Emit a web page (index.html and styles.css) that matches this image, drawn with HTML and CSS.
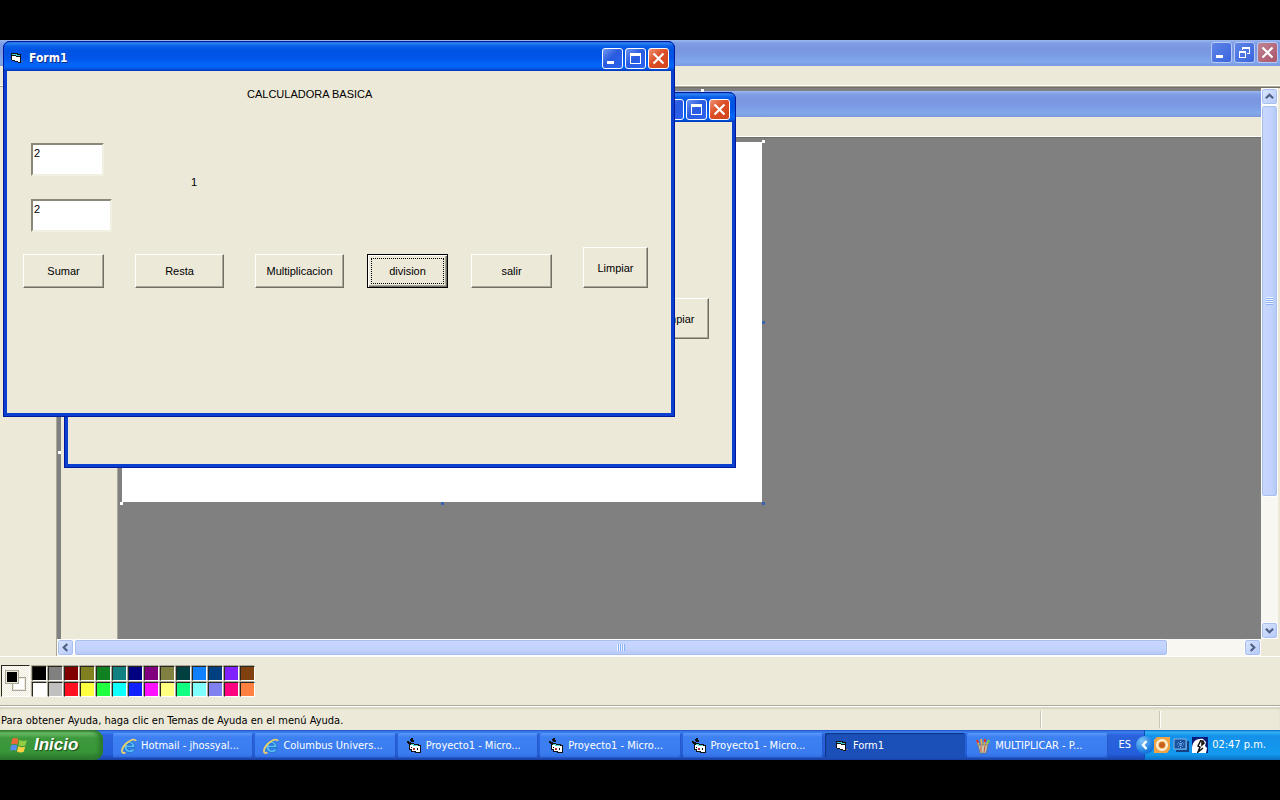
FILE: index.html
```html
<!DOCTYPE html>
<html lang="es">
<head>
    <meta charset="UTF-8">
    <meta name="viewport" content="width=device-width, initial-scale=1.0">
    <title>Form1</title>
    <link rel="stylesheet" href="styles.css">
</head>
<body>

<svg class="defs" aria-hidden="true">
    <symbol id="i-min" viewBox="0 0 19 19"><path d="M4 12h7v3H4z" fill="#fff"/></symbol>
    <symbol id="i-max" viewBox="0 0 19 19"><path d="M4 4h11v11H4zM5 7v7h9V7z" fill="#fff" fill-rule="evenodd"/></symbol>
    <symbol id="i-restore" viewBox="0 0 19 19"><path d="M7 4h8v7h-3v-1h2V6H8v1H7zM4 8h7v7H4zM5 10v4h5v-4z" fill="#fff" fill-rule="evenodd"/></symbol>
    <symbol id="i-close" viewBox="0 0 19 19"><path d="M4.500 4.500l10 10M14.500 4.500l-10 10" stroke="#fff" stroke-width="2.200" fill="none"/></symbol>
    <symbol id="i-arrow" viewBox="0 0 10 10"><path d="M1 7l4-4 4 4" stroke="#4d6185" stroke-width="2.400" fill="none"/></symbol>
    <symbol id="i-form" viewBox="0 0 16 16">
        <path d="M3 3h7v1h3v9h-3v-1H7v-1H4v-1H3z" fill="#111"/>
        <path d="M4 4h5v1h3v1H8V5H4z" fill="#4cc"/>
        <path d="M4 6h4v1h4v5h-2v-1H7v-1H4z" fill="#fff"/>
        <path d="M13 12h2v-1h-1z" fill="#777"/>
    </symbol>
    <symbol id="i-vb" viewBox="0 0 16 16">
        <path d="M5 0h2v2h1v2H5V3H4V1h1zM1 3h2v1h2v2H2V5H1zM3 5h5v1h5v1h2v8H9v-1H5v-2H3z" fill="#111"/>
        <path d="M5 6h3v1h4v1H7V7H5z" fill="#5dd"/>
        <path d="M4 7h3v1h7v6h-4v-1H6v-2H4z" fill="#fff"/>
        <path d="M7 10h2v2H7z" fill="#a33"/>
        <path d="M11 10h1v2h-1zM5 9h1v1H5z" fill="#111"/>
    </symbol>
    <symbol id="i-ie" viewBox="0 0 16 16">
        <path d="M14 9.500H6c.3 3 4 3.200 5 1.500h3C12.500 16.500 3 15.500 3 8.500S14 1.500 14 9.500zM6 7.200h5c-.5-2.500-4.500-2.500-5 0z" fill="#5cc0f7" stroke="#1765c0" stroke-width=".7" fill-rule="evenodd"/>
        <path d="M15 3C13.500-.5 5 3.500 2 9.500c-2 4-1 6.500 2.500 5" stroke="#e8cf6a" stroke-width="1.800" fill="none"/>
    </symbol>
    <symbol id="i-paint" viewBox="0 0 16 16">
        <path d="M4 8L2 2M7 8L6 1M9 8l1-7M11 8l3-6" stroke-width="1.800" stroke="#e6b04a"/>
        <path d="M2 2l1 3M10 1v3" stroke="#d33" stroke-width="2"/>
        <path d="M14 2l-1 3" stroke="#5c5" stroke-width="2"/>
        <path d="M3 7h10l-2 8H5z" fill="#c9c4b0" stroke="#6b6f60" stroke-width=".7"/>
        <path d="M6 8v6M10 8l-1 6" stroke="#c8542e"/>
    </symbol>
</svg>

<main class="desktop">

    <!-- Paint -->
    <section class="paint">
        <div class="paint-title">
            <div class="win-buttons">
                <button class="win-btn" aria-label="Minimizar"><svg><use href="#i-min"/></svg></button>
                <button class="win-btn" aria-label="Restaurar"><svg><use href="#i-restore"/></svg></button>
                <button class="win-btn close" aria-label="Cerrar"><svg><use href="#i-close"/></svg></button>
            </div>
        </div>
        <div class="paint-menu"></div>

        <div class="workspace">
            <div class="toolbox"></div>
            <div class="view">
                <div class="view-row">
                    <div class="canvas">
                        <div class="picture">
                            <i class="handle top-mid"></i>
                            <i class="handle left-mid"></i>
                            <div class="paint-title"></div>
                            <div class="paint-menu"></div>
                            <div class="picture-work">
                                <div class="toolbox"></div>
                                <div class="picture-area">
                                    <div class="sheet">
                                        <i class="handle ne"></i>
                                        <i class="handle e"></i>
                                        <i class="handle se"></i>
                                        <i class="handle s"></i>
                                        <i class="handle sw"></i>
                                    </div>
                                </div>
                            </div>
                        </div>
                    </div>
                    <div class="scroll vertical">
                        <button class="scroll-btn" aria-label="Subir"><svg><use href="#i-arrow"/></svg></button>
                        <div class="thumb"><span class="grip"></span></div>
                        <div class="track"></div>
                        <button class="scroll-btn down" aria-label="Bajar"><svg><use href="#i-arrow"/></svg></button>
                    </div>
                </div>
                <div class="scroll horizontal">
                    <button class="scroll-btn left" aria-label="Izquierda"><svg><use href="#i-arrow"/></svg></button>
                    <div class="thumb"><span class="grip"></span></div>
                    <div class="track"></div>
                    <button class="scroll-btn right" aria-label="Derecha"><svg><use href="#i-arrow"/></svg></button>
                </div>
            </div>
        </div>

        <div class="palette">
            <div class="current"><i class="back"></i><i class="front"></i></div>
            <div class="colors">
                <i class="c-black"></i><i class="c-gray"></i><i class="c-maroon"></i><i class="c-olive"></i><i class="c-green"></i><i class="c-teal"></i><i class="c-navy"></i><i class="c-purple"></i><i class="c-moss"></i><i class="c-pine"></i><i class="c-azure"></i><i class="c-marine"></i><i class="c-violet"></i><i class="c-brown"></i>
                <i class="c-white"></i><i class="c-silver"></i><i class="c-red"></i><i class="c-yellow"></i><i class="c-lime"></i><i class="c-cyan"></i><i class="c-blue"></i><i class="c-magenta"></i><i class="c-cream"></i><i class="c-mint"></i><i class="c-sky"></i><i class="c-lilac"></i><i class="c-pink"></i><i class="c-orange"></i>
            </div>
        </div>
        <div class="status">
            <p>Para obtener Ayuda, haga clic en Temas de Ayuda en el menú Ayuda.</p>
            <span></span>
            <span></span>
        </div>
    </section>

    <!-- Ventana de atrás -->
    <section class="window window-back">
        <div class="title">
            <div class="win-buttons">
                <button class="win-btn" aria-label="Minimizar"><svg><use href="#i-min"/></svg></button>
                <button class="win-btn" aria-label="Maximizar"><svg><use href="#i-max"/></svg></button>
                <button class="win-btn close" aria-label="Cerrar"><svg><use href="#i-close"/></svg></button>
            </div>
        </div>
        <div class="form-body">
            <button class="btn small tall">Limpiar</button>
        </div>
    </section>

    <!-- Calculadora -->
    <section class="window window-front">
        <div class="title">
            <svg class="icon"><use href="#i-form"/></svg>
            <h1>Form1</h1>
            <div class="win-buttons">
                <button class="win-btn" aria-label="Minimizar"><svg><use href="#i-min"/></svg></button>
                <button class="win-btn" aria-label="Maximizar"><svg><use href="#i-max"/></svg></button>
                <button class="win-btn close" aria-label="Cerrar"><svg><use href="#i-close"/></svg></button>
            </div>
        </div>
        <form class="form-body" onsubmit="return false">
            <h2>CALCULADORA BASICA</h2>
            <div class="entry">
                <div class="numbers">
                    <textarea class="num1" id="num1" aria-label="Número 1">2</textarea>
                    <textarea class="num2" id="num2" aria-label="Número 2">2</textarea>
                </div>
                <output for="num1 num2">1</output>
            </div>
            <div class="buttons">
                <button class="btn">Sumar</button>
                <button class="btn wide">Resta</button>
                <button class="btn wide">Multiplicacion</button>
                <button class="btn near active">division</button>
                <button class="btn near">salir</button>
                <button class="btn small tall">Limpiar</button>
            </div>
        </form>
    </section>

    <footer class="taskbar">
        <button class="start">
            <svg viewBox="0 0 18 18">
                <path d="M2 3q3-2 6 0L7 8Q4 6.500 1 8z" fill="#ee6a35"/>
                <path d="M9 3.500q3 2 7 .5l-1.500 5Q11 10.500 8 8.500z" fill="#8fce42"/>
                <path d="M1 9q3-1.500 6 0l-1.500 5Q3 12.500 0 14z" fill="#5a8cf0"/>
                <path d="M8 9.500q3 2 6.500.5L13 15q-3.500 1.500-6.500-.5z" fill="#fbd044"/>
            </svg>
            Inicio
        </button>
        <nav class="tasks">
            <button class="task"><svg><use href="#i-ie"/></svg>Hotmail - jhossyal...</button>
            <button class="task"><svg><use href="#i-ie"/></svg>Columbus Univers...</button>
            <button class="task"><svg><use href="#i-vb"/></svg>Proyecto1 - Micro...</button>
            <button class="task"><svg><use href="#i-vb"/></svg>Proyecto1 - Micro...</button>
            <button class="task"><svg><use href="#i-vb"/></svg>Proyecto1 - Micro...</button>
            <button class="task pressed"><svg><use href="#i-form"/></svg>Form1</button>
            <button class="task"><svg><use href="#i-paint"/></svg>MULTIPLICAR - P...</button>
        </nav>
        <span class="lang">ES</span>
        <div class="tray">
            <button class="expand" aria-label="Mostrar iconos ocultos">
                <svg viewBox="0 0 18 18"><path d="M10.500 5L7 9l3.500 4" stroke="#fff" stroke-width="2.400" fill="none"/></svg>
            </button>
            <svg viewBox="0 0 16 16">
                <path d="M3 0h13v12l-3 4H0V3z" fill="#f0a445"/>
                <circle cx="8" cy="8" r="5" fill="#f6c27c" stroke="#fff3dc" stroke-width="2"/>
                <circle cx="8" cy="8" r="3" fill="#c8611b"/>
            </svg>
            <svg viewBox="0 0 16 16">
                <path d="M1 2h12v10H1z" fill="#1b529f" stroke="#87b3df"/>
                <path d="M3 14h12V4" fill="none" stroke="#16407f" stroke-width="2"/>
                <path d="M4 7h7M7.500 4v7M5 5l5 5M10 5l-5 5" stroke="#72b4ea" stroke-dasharray="1 1"/>
            </svg>
            <svg viewBox="0 0 16 16">
                <path d="M0 0h16v16H0z" fill="#0a1c78"/>
                <path d="M0 16v-4C0 5 4 1 11 2l3 3-1 4 2 2-1 5z" fill="#fff"/>
                <path d="M9 3L6 9l2 1-2 5 5-4M10 4v4l2-2-1-2z" stroke="#111" stroke-width="1.500" fill="none"/>
            </svg>
            <time>02:47 p.m.</time>
        </div>
    </footer>
</main>

</body>
</html>
```
FILE: styles.css
```css
* {
    box-sizing: border-box;
}
body {
    margin: 0;
    min-height: 100vh;
    padding: 40px 0;
    display: flex;
    background: #000;
    font-family: "Liberation Sans", Arial, sans-serif;
    font-size: 11px;
    line-height: 16px;
    color: #000;
}
h1, h2, p {
    margin: 0;
}
button {
    font: inherit;
    color: inherit;
    padding: 0;
    margin: 0;
}
svg {
    display: block;
    flex: none;
}
.defs {
    position: absolute;
    width: 0;
    height: 0;
}
.desktop {
    position: relative;
    flex: 1;
    min-width: 0;
    display: flex;
    flex-direction: column;
    overflow: hidden;
}

/* Paint */
.paint {
    flex: 1;
    display: flex;
    flex-direction: column;
    background: #ece9d8;
}
.paint-title {
    flex: none;
    height: 26px;
    padding: 2px 2px 0 0;
    background: linear-gradient(#9db9f0 0, #809fe6 3px, #7a96df 8px, #7b9ae4 14px, #82a8ea 22px, #7b98df 26px);
}
.paint-menu {
    flex: none;
    height: 20px;
    border-bottom: 1px solid #fff;
}
.workspace {
    flex: 1;
    display: flex;
    min-height: 0;
    border-top: 1px solid #aca899;
    border-bottom: 1px solid #fff;
}
.toolbox {
    flex: none;
    width: 57px;
    background: #ece9d8;
    border-right: 1px solid #aca899;
}
.view {
    flex: 1;
    min-width: 0;
    display: flex;
    flex-direction: column;
    padding-right: 2px;
    border-top: 1px solid #716f64;
}
.view-row {
    flex: 1;
    display: flex;
    min-height: 0;
}
.canvas {
    flex: 1;
    min-width: 0;
    display: flex;
    padding: 3px 0 0 4px;
    background: #808080;
    overflow: hidden;
}
.picture {
    position: relative;
    flex: 1;
    display: flex;
    flex-direction: column;
    background: #ece9d8;
}
.picture-work {
    flex: 1;
    display: flex;
}
.picture-area {
    flex: 1;
    padding: 4px;
    background: #808080;
    border-top: 1px solid #716f64;
}
.sheet {
    position: relative;
    width: 640px;
    height: 360px;
    background: #fff;
}
.handle {
    position: absolute;
    width: 3px;
    height: 3px;
    background: #3a63b0;
}
.top-mid {
    left: 640px;
    top: -2px;
    background: #fff;
}
.left-mid {
    left: -3px;
    top: 360px;
    background: #fff;
}
.ne {
    right: -3px;
    top: -2px;
    background: #fff;
}
.e {
    right: -3px;
    top: 179px;
}
.se {
    right: -3px;
    bottom: -3px;
}
.s {
    left: 319px;
    bottom: -3px;
}
.sw {
    left: -2px;
    bottom: -3px;
    background: #fff;
}

.scroll {
    display: flex;
    flex: none;
    background: #f8f7f2;
}
.vertical {
    flex-direction: column;
    width: 17px;
}
.horizontal {
    height: 17px;
    margin-right: 17px;
}
.scroll-btn {
    display: flex;
    align-items: center;
    justify-content: center;
    flex: none;
    width: 17px;
    height: 17px;
    border: 1px solid #fff;
    border-radius: 3px;
    background: linear-gradient(135deg, #dbe6ff, #b4c8f8);
    box-shadow: inset 0 0 0 1px #a9bfee;
}
.scroll-btn svg {
    width: 9px;
    height: 9px;
}
.down svg {
    transform: rotate(180deg);
}
.left svg {
    transform: rotate(-90deg);
}
.right svg {
    transform: rotate(90deg);
}
.thumb {
    display: flex;
    align-items: center;
    justify-content: center;
    border: 1px solid #fff;
    border-radius: 3px;
    box-shadow: inset 0 0 0 1px #a9bfee;
}
.vertical .thumb {
    flex: 392;
    background: linear-gradient(90deg, #c9d7fd, #c2d3fd 60%, #b3c7f7);
}
.vertical .track {
    flex: 125;
}
.horizontal .thumb {
    flex: 1094;
    background: linear-gradient(#c9d7fd, #c2d3fd 60%, #b3c7f7);
}
.horizontal .track {
    flex: 76;
}
.grip {
    width: 7px;
    height: 8px;
    background: repeating-linear-gradient(#eef4fe 0 1px, #8cb0f8 1px 2px);
}
.horizontal .grip {
    width: 8px;
    height: 7px;
    background: repeating-linear-gradient(90deg, #eef4fe 0 1px, #8cb0f8 1px 2px);
}

.palette {
    flex: none;
    display: flex;
    gap: 1px;
    height: 49px;
    padding: 8px 0 0 1px;
    border-bottom: 1px solid #aca899;
}
.current {
    position: relative;
    width: 29px;
    height: 32px;
    border: 1px solid #fff;
    border-top-color: #29281f;
    border-left-color: #29281f;
    background: repeating-conic-gradient(#fff 0 25%, #ece9d8 0 50%) 0 0 / 2px 2px;
}
.current i {
    position: absolute;
    width: 14px;
    height: 14px;
    border: 1px solid #aca899;
    box-shadow: inset 0 0 0 1px #ece9d8;
}
.front {
    left: 3px;
    top: 4px;
    background: #000;
}
.back {
    left: 10px;
    top: 11px;
    background: #fff;
}
.colors {
    display: grid;
    grid-template-columns: repeat(14, 16px);
    grid-auto-rows: 16px;
}
.colors i {
    border: 1px solid #fff;
    border-top-color: #29281f;
    border-left-color: #29281f;
    margin: 1px 0 0 1px;
    box-shadow: -1px -1px #aca899;
}
.c-black { background: #000; }
.c-gray { background: #808080; }
.c-maroon { background: #800000; }
.c-olive { background: #808020; }
.c-green { background: #108020; }
.c-teal { background: #108080; }
.c-navy { background: #000080; }
.c-purple { background: #800080; }
.c-moss { background: #808040; }
.c-pine { background: #004040; }
.c-azure { background: #1080ff; }
.c-marine { background: #004080; }
.c-violet { background: #8020ff; }
.c-brown { background: #804010; }
.c-white { background: #fff; }
.c-silver { background: #c0c0c0; }
.c-red { background: #ff1020; }
.c-yellow { background: #ffff40; }
.c-lime { background: #20ff40; }
.c-cyan { background: #10ffff; }
.c-blue { background: #1020ff; }
.c-magenta { background: #ff10ff; }
.c-cream { background: #ffff80; }
.c-mint { background: #10ff80; }
.c-sky { background: #80ffff; }
.c-lilac { background: #8080f0; }
.c-pink { background: #ff0080; }
.c-orange { background: #ff8040; }

.status {
    flex: none;
    display: flex;
    height: 24px;
    padding: 4px 2px 2px 1px;
    border-top: 1px solid #fff;
    font-family: "DejaVu Sans Condensed", "DejaVu Sans", sans-serif;
    box-shadow: inset 0 2px 2px #d8d4c3;
}
.status p {
    flex: 1;
    padding-top: 2px;
}
.status span {
    width: 119px;
    border-left: 1px solid #c9c5b2;
    box-shadow: inset 1px 0 #fff;
}

/* Ventanas */
.window {
    position: absolute;
    width: 672px;
    background: #ece9d8;
    border: 4px solid #0a3fd0;
    border-top: 0;
    border-radius: 7px 7px 0 0;
    outline: 1px solid #001a9c;
    outline-offset: -1px;
}
.window-back {
    left: 64px;
    top: 52px;
}
.window-front {
    left: 3px;
    top: 1px;
}
.title {
    display: flex;
    align-items: center;
    height: 30px;
    margin: 0 -4px;
    padding: 4px 6px 0 5px;
    border-radius: 7px 7px 0 0;
    background: linear-gradient(#0a3bc0 0, #2f86f5 2px, #0a5fe8 5px, #0054e3 9px, #0055e8 17px, #0466fb 24px, #0360f0 27px, #0037b8 30px);
}
.title h1 {
    margin-left: 5px;
    color: #fff;
    font-family: "DejaVu Sans Condensed", "DejaVu Sans", sans-serif;
    font-size: 12px;
    font-weight: bold;
    text-shadow: 1px 1px #0a2c8c;
}
.icon {
    width: 16px;
    height: 16px;
}
.win-buttons {
    display: flex;
    gap: 2px;
    justify-content: flex-end;
    margin-left: auto;
}
.win-btn {
    width: 21px;
    height: 21px;
    border: 1px solid #fff;
    border-radius: 3px;
    background: linear-gradient(135deg, #6f95f0, #2a5be0 45%, #2a62f0);
}
.win-btn svg {
    width: 19px;
    height: 19px;
}
.win-btn.close {
    background: linear-gradient(135deg, #ee9274, #dc4e26 45%, #d0441c);
}
.paint .win-btn {
    border-color: #b9caf5;
    background: linear-gradient(135deg, #5f85e8, #3a64dd);
}
.paint .win-btn.close {
    background: linear-gradient(135deg, #c08492, #ab5468);
}

.form-body {
    padding: 15px 0 125px 16px;
}
.window-back .form-body {
    display: flex;
    justify-content: flex-end;
    padding: 176px 23px 125px 0;
}
.form-body h2 {
    padding-left: 224px;
    font-size: 11px;
    font-weight: normal;
}
.entry {
    display: flex;
    gap: 79px;
    padding: 41px 0 15px 8px;
}
.numbers {
    display: flex;
    flex-direction: column;
    gap: 23px;
    width: 81px;
}
textarea {
    height: 33px;
    padding: 0 1px;
    border: 2px solid #f1efe2;
    border-top-color: #8a877a;
    border-left-color: #8a877a;
    border-radius: 0;
    background: #fff;
    font: inherit;
    resize: none;
    overflow: hidden;
    outline: 0;
}
.num1 {
    width: 73px;
}
.num2 {
    width: 81px;
}
output {
    padding-top: 31px;
}
.buttons {
    display: flex;
    align-items: flex-end;
    gap: 31px;
}
.btn {
    width: 81px;
    height: 34px;
    border: 1px solid #716f64;
    border-top-color: #fff;
    border-left-color: #fff;
    background: #ece9d8;
    box-shadow: inset -1px -1px #aca899;
}
.btn.wide {
    width: 89px;
}
.btn.near {
    margin-left: -8px;
}
.btn.small {
    width: 65px;
}
.btn.tall {
    height: 41px;
}
.btn.active {
    border-color: #000;
    box-shadow: inset 1px 1px #fff, inset -1px -1px #716f64, inset -2px -2px #aca899;
    outline: 1px dotted #000;
    outline-offset: -5px;
}

/* Barra de tareas */
.taskbar {
    flex: none;
    display: flex;
    height: 30px;
    background: linear-gradient(#1f4fc4 0, #3b82f0 2px, #2a63dc 5px, #245edb 24px, #1941a5 30px);
    color: #fff;
    font-family: "DejaVu Sans Condensed", "DejaVu Sans", sans-serif;
}
.start {
    display: flex;
    align-items: center;
    gap: 5px;
    width: 103px;
    padding-left: 10px;
    border: 0;
    border-radius: 0 9px 9px 0;
    background: linear-gradient(#2c7a2c 0, #6cbb67 3px, #3c9a3c 8px, #389638 22px, #2a722a 30px);
    box-shadow: inset -4px 0 4px #2a7a2c;
    font-family: "Liberation Sans", Arial, sans-serif;
    font-size: 17px;
    font-style: italic;
    font-weight: bold;
    text-shadow: 1px 1px 1px #1c4a1c;
}
.start svg {
    width: 19px;
    height: 19px;
}
.tasks {
    flex: 1;
    min-width: 0;
    display: flex;
    gap: 2px;
    padding: 3px 0 2px 10px;
}
.task {
    display: flex;
    align-items: center;
    gap: 4px;
    flex: 1 1 0;
    min-width: 0;
    padding-left: 8px;
    border: 0;
    border-radius: 2px;
    background: linear-gradient(#5c98fa 0, #3c80f2 4px, #3a7cf0 20px, #2f6be0 25px);
    box-shadow: inset -1px -1px #2659c8;
    white-space: nowrap;
    overflow: hidden;
}
.task svg {
    width: 16px;
    height: 16px;
}
.task.pressed {
    background: #1b50b8;
    box-shadow: inset 1px 1px 1px #0f3480;
}
.lang {
    padding: 7px 13px 0 11px;
}
.tray {
    display: flex;
    align-items: center;
    gap: 3px;
    padding-right: 14px;
    border-left: 1px solid #0c4fb0;
    background: linear-gradient(#0c64c8 0, #30b4f4 2px, #1590ea 6px, #129aef 24px, #0d6fc4 30px);
}
.tray > svg {
    width: 16px;
    height: 16px;
}
.expand {
    width: 18px;
    height: 18px;
    margin: 0 -3px 0 -9px;
    border: 0;
    border-radius: 50%;
    background: radial-gradient(circle at 6px 5px, #7cc4fb, #1f7fe0 60%, #0b57b8);
}
.tray time {
    margin-left: 1px;
}
```
